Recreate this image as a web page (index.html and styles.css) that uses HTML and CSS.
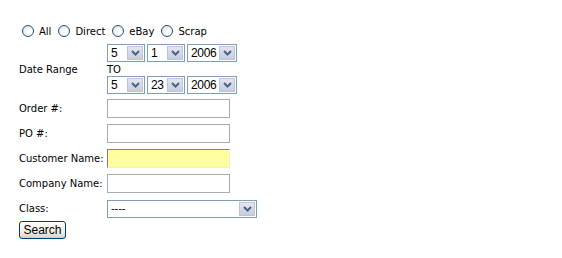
FILE: index.html
```html
<!DOCTYPE html>
<html>
<head>
<meta charset="utf-8">
<link rel="stylesheet" href="styles.css">
</head>
<body>
<form class="form">
  <div class="radios">
    <label class="radio"><span class="dot"></span>All</label>
    <label class="radio"><span class="dot"></span>Direct</label>
    <label class="radio"><span class="dot"></span>eBay</label>
    <label class="radio"><span class="dot"></span>Scrap</label>
  </div>
  <div class="row date-row">
    <div class="label">Date Range</div>
    <div class="ctrl">
      <div class="sels">
        <span class="sel w38"><span class="val">5</span><span class="arr"><svg width="9" height="6" viewBox="0 0 9 6"><path d="M1 1 L4.5 4.5 L8 1" fill="none" stroke="#4d6185" stroke-width="2"/></svg></span></span>
        <span class="sel w38"><span class="val">1</span><span class="arr"><svg width="9" height="6" viewBox="0 0 9 6"><path d="M1 1 L4.5 4.5 L8 1" fill="none" stroke="#4d6185" stroke-width="2"/></svg></span></span>
        <span class="sel w50"><span class="val">2006</span><span class="arr"><svg width="9" height="6" viewBox="0 0 9 6"><path d="M1 1 L4.5 4.5 L8 1" fill="none" stroke="#4d6185" stroke-width="2"/></svg></span></span>
      </div>
      <div class="to">TO</div>
      <div class="sels">
        <span class="sel w38"><span class="val">5</span><span class="arr"><svg width="9" height="6" viewBox="0 0 9 6"><path d="M1 1 L4.5 4.5 L8 1" fill="none" stroke="#4d6185" stroke-width="2"/></svg></span></span>
        <span class="sel w38"><span class="val">23</span><span class="arr"><svg width="9" height="6" viewBox="0 0 9 6"><path d="M1 1 L4.5 4.5 L8 1" fill="none" stroke="#4d6185" stroke-width="2"/></svg></span></span>
        <span class="sel w50"><span class="val">2006</span><span class="arr"><svg width="9" height="6" viewBox="0 0 9 6"><path d="M1 1 L4.5 4.5 L8 1" fill="none" stroke="#4d6185" stroke-width="2"/></svg></span></span>
      </div>
    </div>
  </div>
  <div class="row"><div class="label">Order #:</div><div class="ctrl"><input class="txt" type="text"></div></div>
  <div class="row"><div class="label">PO #:</div><div class="ctrl"><input class="txt" type="text"></div></div>
  <div class="row"><div class="label">Customer Name:</div><div class="ctrl"><input class="txt focus" type="text"></div></div>
  <div class="row"><div class="label">Company Name:</div><div class="ctrl"><input class="txt" type="text"></div></div>
  <div class="row"><div class="label">Class:</div><div class="ctrl">
    <span class="sel w150"><span class="val small">----</span><span class="arr"><svg width="9" height="6" viewBox="0 0 9 6"><path d="M1 1 L4.5 4.5 L8 1" fill="none" stroke="#4d6185" stroke-width="2"/></svg></span></span>
  </div></div>
  <div class="btnrow"><button type="button" class="btn">Search</button></div>
</form>
</body>
</html>
```
FILE: styles.css
```css
html, body {
  margin: 0;
  padding: 0;
  background: #fff;
}
body {
  font-family: "DejaVu Sans", Verdana, sans-serif;
  font-size: 10px;
  color: #000;
}
.form {
  padding: 24px 0 0 19px;
}
.radios {
  display: flex;
  align-items: center;
  gap: 7px;
  margin-left: 3px;
  height: 14px;
}
.radio {
  display: flex;
  align-items: center;
  gap: 5px;
}
.dot {
  width: 12px;
  height: 12px;
  border: 1px solid #1c5180;
  border-radius: 50%;
  background: radial-gradient(circle at 65% 65%, #fff 20%, #dcdcd7 100%);
  box-sizing: border-box;
}
.row {
  display: flex;
  align-items: center;
  height: 25px;
}
.label {
  width: 88px;
  flex: none;
}
.date-row {
  height: auto;
  margin-top: 6px;
  margin-bottom: 2px;
}
.ctrl {
  display: flex;
  flex-direction: column;
}
.sels {
  display: flex;
  gap: 2px;
}
.to {
  font-size: 10px;
  line-height: 13px;
  padding-top: 1px;
}
.sel {
  display: flex;
  align-items: stretch;
  box-sizing: border-box;
  height: 18px;
  border: 1px solid #7f9db9;
  background: #fff;
  padding: 1px;
}
.w38 { width: 38px; }
.w50 { width: 50px; }
.w150 { width: 150px; }
.val {
  flex: 1;
  min-width: 0;
  font-family: "Liberation Sans", Arial, sans-serif;
  font-size: 12px;
  line-height: 14px;
  padding-left: 2px;
  letter-spacing: -0.3px;
  overflow: hidden;
}
.val.small {
  font-family: "DejaVu Sans", Verdana, sans-serif;
  font-size: 10px;
  letter-spacing: 0;
}
.arr {
  width: 16px;
  flex: none;
  display: flex;
  align-items: center;
  justify-content: center;
  background: linear-gradient(#e3e6f1, #c6cce0);
  border: 1px solid #bcc3da;
  box-sizing: border-box;
}
.txt {
  box-sizing: border-box;
  width: 123px;
  height: 19px;
  border: 1px solid #a5acb2;
  margin: 0;
  padding: 0;
  background: #fff;
}
.txt.focus {
  background: #ffffa0;
  border-top-color: #808080;
  border-left-color: #808080;
  border-right-color: #f0f0d0;
  border-bottom-color: #f0f0d0;
}
.btn {
  box-sizing: border-box;
  width: 47px;
  height: 18px;
  padding: 0;
  font-family: "Liberation Sans", Arial, sans-serif;
  font-size: 12px;
  line-height: 14px;
  border: 1px solid #003c74;
  border-radius: 3px;
  background: linear-gradient(#ffffff, #ecebe6 70%, #d6d0c5);
  color: #000;
}
```
